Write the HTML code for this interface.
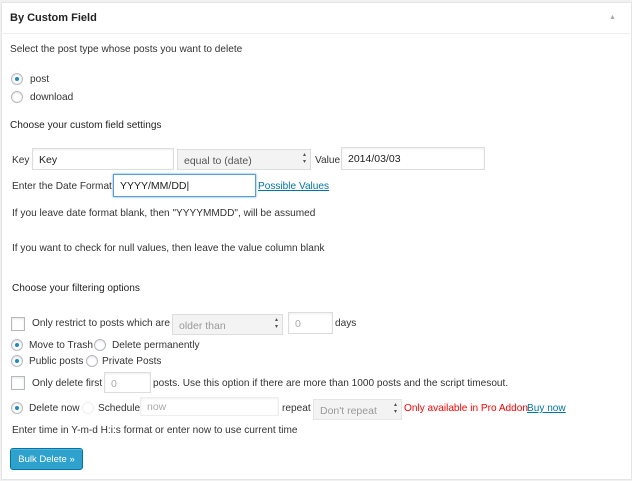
<!DOCTYPE html>
<html><head><style>
body{margin:0;width:632px;height:481px;background:#f1f1f1;font-family:"Liberation Sans",sans-serif;font-size:10.1px;color:#333;position:relative;overflow:hidden}
.panel{position:absolute;left:1px;top:2px;width:629px;height:476px;background:#fff;border:1px solid #e5e5e5}
.hd{position:absolute;left:0;top:0;width:629px;height:31px;border-bottom:1px solid #eee}
.a{position:absolute;white-space:nowrap;line-height:14px;top:0}
.r{position:absolute;width:10px;height:10px;border:1px solid #b4b9be;border-radius:50%;background:#fff;box-shadow:inset 0 1px 2px rgba(0,0,0,.1)}
.r.on::after{content:"";position:absolute;left:3px;top:3px;width:4px;height:4px;border-radius:50%;background:#1e8cbe}
.c{position:absolute;width:12px;height:12px;border:1px solid #b4b9be;background:#fff;box-shadow:inset 0 1px 2px rgba(0,0,0,.1)}
.i{position:absolute;border:1px solid #ddd;background:#fff;box-shadow:inset 0 1px 2px rgba(0,0,0,.07);box-sizing:border-box;font-size:10.5px;padding:4px 6px 3px;line-height:14px}
.s{position:absolute;border:1px solid #ddd;background:#f3f3f3;box-sizing:border-box;font-size:10.5px;padding:4px 6px 3px;color:#555;line-height:14px}
.s::after{content:"\25B4\A\25BE";white-space:pre;position:absolute;right:4px;top:2px;font-size:6px;line-height:7px;color:#555}
.b{font-weight:bold}
</style></head><body>
<div class="panel"></div>
<div class="hd" style="left:1px;top:2px"></div>
<div class="a b" style="left:10px;top:11px;font-size:11px;color:#222">By Custom Field</div>
<div class="a" style="left:609px;top:11px;font-size:7px;color:#aaa">▲</div>
<div class="a" style="left:10px;top:43px">Select the post type whose posts you want to delete</div>
<div class="r on" style="left:11px;top:73px"></div><div class="a" style="left:30px;top:73px">post</div>
<div class="r" style="left:11px;top:91px"></div><div class="a" style="left:30px;top:91px">download</div>
<div class="a" style="left:10px;top:119px;color:#222">Choose your custom field settings</div>
<div class="a" style="left:12px;top:154px">Key</div>
<div class="i" style="left:32px;top:148px;width:142px;height:22px;color:#222">Key</div>
<div class="s" style="left:177px;top:149px;width:134px;height:21px">equal to (date)</div>
<div class="a" style="left:315px;top:154px">Value</div>
<div class="i" style="left:341px;top:147px;width:144px;height:23px;color:#222">2014/03/03</div>
<div class="a" style="left:12px;top:180px">Enter the Date Format</div>
<div class="i" style="left:113px;top:174px;width:143px;height:23px;border-color:#5b9dd9;box-shadow:0 0 2px rgba(30,140,190,.8);color:#222">YYYY/MM/DD|</div>
<div class="a" style="left:258px;top:180px;color:#0074a2;text-decoration:underline">Possible Values</div>
<div class="a" style="left:12px;top:207px">If you leave date format blank, then "YYYYMMDD", will be assumed</div>
<div class="a" style="left:12px;top:242px">If you want to check for null values, then leave the value column blank</div>
<div class="a" style="left:12px;top:282px;color:#222">Choose your filtering options</div>
<div class="c" style="left:11px;top:317px"></div>
<div class="a" style="left:32px;top:317px">Only restrict to posts which are</div>
<div class="s" style="left:172px;top:314px;width:111px;height:21px;color:#999">older than</div>
<div class="i" style="left:288px;top:312px;width:45px;height:22px;color:#aaa">0</div>
<div class="a" style="left:335px;top:317px">days</div>
<div class="r on" style="left:11px;top:339px"></div><div class="a" style="left:29px;top:339px">Move to Trash</div>
<div class="r" style="left:94px;top:339px"></div><div class="a" style="left:112px;top:339px">Delete permanently</div>
<div class="r on" style="left:11px;top:355px"></div><div class="a" style="left:29px;top:355px">Public posts</div>
<div class="r" style="left:86px;top:355px"></div><div class="a" style="left:102px;top:355px">Private Posts</div>
<div class="c" style="left:11px;top:376px"></div>
<div class="a" style="left:32px;top:377px">Only delete first</div>
<div class="i" style="left:104px;top:372px;width:47px;height:21px;color:#aaa">0</div>
<div class="a" style="left:153px;top:377px">posts. Use this option if there are more than 1000 posts and the script timesout.</div>
<div class="r on" style="left:11px;top:402px"></div><div class="a" style="left:29px;top:402px">Delete now</div>
<div class="r" style="left:82px;top:402px;border-color:#eee;box-shadow:none"></div><div class="a" style="left:98px;top:402px">Schedule</div>
<div class="i" style="left:140px;top:397px;width:139px;height:19px;padding-top:2px;border-color:#eee;color:#aaa">now</div>
<div class="a" style="left:282px;top:402px">repeat</div>
<div class="s" style="left:313px;top:399px;width:89px;height:21px;color:#999;border-color:#e5e5e5">Don't repeat</div>
<div class="a" style="left:404px;top:402px;color:#f00">Only available in Pro Addon</div>
<div class="a" style="left:527px;top:402px;color:#0074a2;text-decoration:underline">Buy now</div>
<div class="a" style="left:12px;top:424px">Enter time in Y-m-d H:i:s format or enter now to use current time</div>
<div class="a" style="left:10px;top:448px;width:73px;height:22px;line-height:22px;background:#2ea2cc;border:1px solid #0074a2;border-radius:3px;box-sizing:border-box;color:#fff;text-align:center;font-size:9.5px;box-shadow:inset 0 1px 0 rgba(120,200,230,.5)">Bulk Delete »</div>
</body></html>
